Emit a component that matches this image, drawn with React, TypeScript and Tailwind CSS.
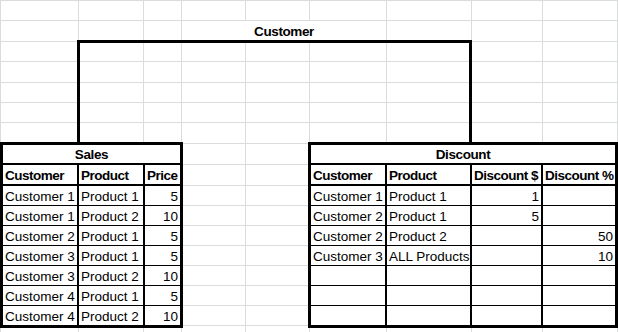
const colStart = ['col-start-1', 'col-start-2', 'col-start-3', 'col-start-4', 'col-start-5', 'col-start-6', 'col-start-7', 'col-start-8', 'col-start-9'];
const rowStart = [
  'row-start-1', 'row-start-2', 'row-start-3', 'row-start-4', 'row-start-5', 'row-start-6',
  'row-start-7', 'row-start-8', 'row-start-9', 'row-start-10', 'row-start-11', 'row-start-12',
  'row-start-13', 'row-start-14', 'row-start-15', 'row-start-16', 'row-start-17',
];

const sales = [
  ['Customer 1', 'Product 1', '5'],
  ['Customer 1', 'Product 2', '10'],
  ['Customer 2', 'Product 1', '5'],
  ['Customer 3', 'Product 1', '5'],
  ['Customer 3', 'Product 2', '10'],
  ['Customer 4', 'Product 1', '5'],
  ['Customer 4', 'Product 2', '10'],
];

const discounts = [
  ['Customer 1', 'Product 1', '1', ''],
  ['Customer 2', 'Product 1', '5', ''],
  ['Customer 2', 'Product 2', '', '50'],
  ['Customer 3', 'ALL Products', '', '10'],
  ['', '', '', ''],
  ['', '', '', ''],
  ['', '', '', ''],
];

function Cell({ className = '', right, children }: { className?: string; right?: boolean; children?: React.ReactNode }) {
  return (
    <div className={`flex items-end overflow-hidden whitespace-nowrap pb-[2px] ${right ? 'justify-end pr-[2px]' : 'pl-[2px]'} ${className}`}>
      {children}
    </div>
  );
}

function SalesTable() {
  return (
    <div className="col-start-1 col-span-3 row-start-8 row-span-9 -mt-[2px] -mb-[2px] -ml-[1px] -mr-[1px] flex flex-col border-[3px] border-black bg-white">
      <div className="flex h-[20px] items-end justify-center border-b-2 border-black pb-[2px] font-bold tracking-[-0.4px]">Sales</div>
      <div className="flex h-[21px] border-b-2 border-black font-bold tracking-[-0.5px]">
        <Cell className="w-[76px] border-r-2 border-black">Customer</Cell>
        <Cell className="w-[66px] border-r-2 border-black">Product</Cell>
        <Cell className="flex-1">Price</Cell>
      </div>
      {sales.map(([c, p, v], i) => (
        <div key={i} className={`flex ${i < sales.length - 1 ? 'h-[20px] border-b border-black' : 'h-[19px]'}`}>
          <Cell className="w-[76px] border-r-2 border-black">{c}</Cell>
          <Cell className="w-[66px] border-r-2 border-black">{p}</Cell>
          <Cell className="flex-1" right>{v}</Cell>
        </div>
      ))}
    </div>
  );
}

function DiscountTable() {
  return (
    <div className="col-start-6 col-span-4 row-start-8 row-span-9 -mt-[2px] -mb-[2px] -ml-[2px] flex flex-col border-[3px] border-black bg-white">
      <div className="flex h-[20px] items-end justify-center border-b-2 border-black pb-[2px] font-bold tracking-[-0.4px]">Discount</div>
      <div className="flex h-[21px] border-b-2 border-black font-bold tracking-[-0.5px]">
        <Cell className="w-[76px] border-r-2 border-black">Customer</Cell>
        <Cell className="w-[85px] border-r-2 border-black">Product</Cell>
        <Cell className="w-[71px] border-r-2 border-black">Discount $</Cell>
        <Cell className="flex-1">Discount %</Cell>
      </div>
      {discounts.map(([c, p, d, pct], i) => (
        <div key={i} className={`flex ${i < discounts.length - 1 ? 'h-[20px] border-b border-black' : 'h-[19px]'}`}>
          <Cell className="w-[76px] border-r-2 border-black">{c}</Cell>
          <Cell className="w-[85px] border-r-2 border-black">{p}</Cell>
          <Cell className="w-[71px] border-r-2 border-black" right>{d}</Cell>
          <Cell className="flex-1" right>{pct}</Cell>
        </div>
      ))}
    </div>
  );
}

export default function App() {
  return (
    <div className="h-[332px] w-[618px] overflow-hidden bg-white font-['Liberation_Sans',Arial,sans-serif] text-[13.5px] leading-none text-black">
      <div className="grid grid-cols-[78px_65px_38px_64px_64px_77px_85px_71px_75px] grid-rows-[20px_21px_20px_21px_20px_20px_21px_21px_21px_20px_20px_20px_20px_20px_20px_20px_20px] border-l border-t border-[#dadcdd]">
        {rowStart.map((r) =>
          colStart.map((c) => <div key={r + c} className={`${r} ${c} border-r border-b border-[#dadcdd]`} />)
        )}

        {/* merged title cell */}
        <div className="col-start-4 col-span-3 row-start-2 flex items-end justify-center border-r border-b border-[#dadcdd] bg-white pb-[3px] font-bold tracking-[-0.4px]">
          Customer
        </div>

        {/* bracket joining both tables */}
        <div className="col-start-2 col-span-6 row-start-3 row-span-5 -mt-[2px] -ml-[2px] border-l-[3px] border-t-[3px] border-r-[3px] border-black" />

        <SalesTable />
        <DiscountTable />
      </div>
    </div>
  );
}
